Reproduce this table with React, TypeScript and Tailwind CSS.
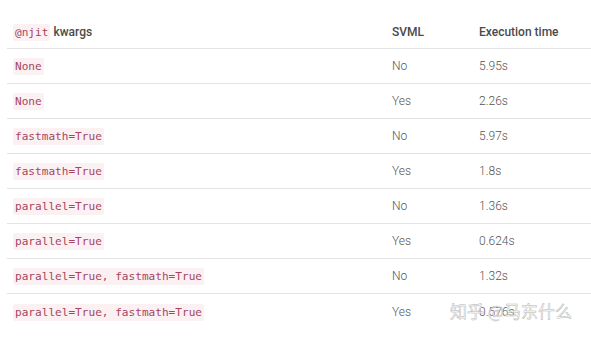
import React from "react";

const rows: [string, string, string][] = [
  ["None", "No", "5.95s"],
  ["None", "Yes", "2.26s"],
  ["fastmath=True", "No", "5.97s"],
  ["fastmath=True", "Yes", "1.8s"],
  ["parallel=True", "No", "1.36s"],
  ["parallel=True", "Yes", "0.624s"],
  ["parallel=True, fastmath=True", "No", "1.32s"],
  ["parallel=True, fastmath=True", "Yes", "0.576s"],
];

function Code({ children }: { children: React.ReactNode }) {
  return (
    <code className="px-[2px] py-[2px] rounded-[2px] bg-[#fbf1f3] text-[#a8445f] text-[11.1px] leading-[13px] [font-family:'DejaVu_Sans_Mono',monospace]">
      {children}
    </code>
  );
}

export default function App() {
  return (
    <div className="relative w-[591px] h-[337px] bg-white overflow-hidden [font-family:Roboto,'Liberation_Sans',sans-serif]">
      <div className="pt-[15px] pl-[7px]">
        <div className="grid grid-cols-[377px_87px_1fr] h-[34px] items-center border-b border-[#e3e3e3] text-[12px] font-medium text-[#4a4a4a]">
          <div className="pl-[6px]">
            <Code>@njit</Code> kwargs
          </div>
          <div className="pl-[8px]">SVML</div>
          <div className="pl-[8px]">Execution time</div>
        </div>
        {rows.map((r, i) => (
          <div
            key={i}
            className={
              i < rows.length - 1
                ? "grid grid-cols-[377px_87px_1fr] h-[35px] items-center border-b border-[#e3e3e3] text-[12px] font-light text-[#555]"
                : "grid grid-cols-[377px_87px_1fr] h-[35px] items-center text-[12px] font-light text-[#555]"
            }
          >
            <div className="pl-[6px]">
              <Code>{r[0]}</Code>
            </div>
            <div className="pl-[8px]">{r[1]}</div>
            <div className="pl-[8px]">{r[2]}</div>
          </div>
        ))}
      </div>
      <div className="absolute left-[450px] top-[298px] whitespace-nowrap text-[17px] leading-[26px] text-[rgba(255,255,255,0.7)] [-webkit-text-stroke:0.5px_#b5b5b5] [font-family:'Noto_Sans_CJK_SC',sans-serif]">
        知乎 @马东什么
      </div>
    </div>
  );
}
